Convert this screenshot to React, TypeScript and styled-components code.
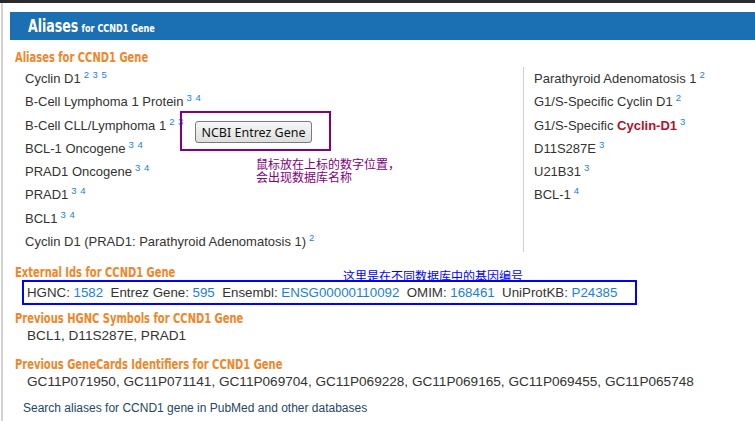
import React from "react";
import styled, { createGlobalStyle } from "styled-components";

const GlobalStyle = createGlobalStyle`
	html, body {
		margin: 0;
		padding: 0;
		background: #ffffff;
	}
	body {
		font-family: "Liberation Sans", Arial, sans-serif;
		color: #333333;
		width: 755px;
		height: 421px;
		overflow: hidden;
	}
`;

const condensed = `"Liberation Sans Narrow", "DejaVu Sans Condensed", "Roboto Condensed", "Liberation Sans", sans-serif`;

const TopBar = styled.div`
	height: 3px;
	background: #2a2a2a;
`;

const Page = styled.div`
	margin-left: 1px;
	border-left: 2px solid #d2d2d2;
	height: 418px;
	padding-top: 9px;
	box-sizing: border-box;
`;

const Header = styled.div`
	margin-left: 7px;
	height: 28px;
	background: #1b6fb3;
	padding-left: 18px;
	color: #ffffff;
	font-family: ${condensed};
	font-weight: bold;
`;

const HeaderText = styled.div`
	display: inline-block;
	line-height: 28px;
	transform: scaleX(0.82);
	transform-origin: left center;
	white-space: nowrap;
`;

const HeaderTitle = styled.span`
	font-size: 17px;
	margin-right: 4px;
`;

const HeaderSub = styled.span`
	font-size: 11px;
`;

const Content = styled.div`
	padding-left: 12px;
	position: relative;
`;

const Heading = styled.div<{ $top: number }>`
	font-family: ${condensed};
	font-weight: bold;
	font-size: 14px;
	line-height: 16px;
	color: #f0862a;
	margin-top: ${(p) => p.$top}px;
	white-space: nowrap;
	transform: scaleX(0.79);
	transform-origin: left center;
`;

const AliasGrid = styled.div`
	display: grid;
	grid-template-columns: 508px 1fr;
	margin-top: 2px;
	position: relative;
`;

const LeftCol = styled.div`
	padding-left: 10px;
`;

const RightCol = styled.div`
	border-left: 1px solid #d0d0d0;
	padding-left: 10px;
	height: 185px;
`;

const Alias = styled.div`
	height: 23.3px;
	line-height: 23.3px;
	font-size: 13px;
	color: #333333;
	white-space: nowrap;
`;

const Sup = styled.sup`
	font-size: 9.5px;
	color: #1a7fd6;
	margin-left: 3px;
	vertical-align: 5px;
	line-height: 0;
	word-spacing: 1px;
`;

const Red = styled.b`
	color: #b0122c;
`;

const PopupBox = styled.div`
	position: absolute;
	left: 165px;
	top: 44px;
	width: 151px;
	height: 40px;
	box-sizing: border-box;
	border: 2px solid #800080;
	display: flex;
	align-items: center;
	padding-left: 13px;
`;

const GeneButton = styled.button`
	height: 22px;
	width: 117px;
	padding: 0;
	border: 1px solid #7a7a7a;
	border-radius: 3px;
	background: linear-gradient(#f7f7f7, #dedede);
	font-family: "Noto Sans", "Open Sans", sans-serif;
	font-size: 12.5px;
	color: #111111;
	margin-top: 2px;
`;

const Note = styled.div<{ $color: string; $left: number; $top: number }>`
	position: absolute;
	left: ${(p) => p.$left}px;
	top: ${(p) => p.$top}px;
	font-family: "Noto Sans CJK SC", sans-serif;
	font-size: 12px;
	line-height: 13px;
	color: ${(p) => p.$color};
	white-space: nowrap;
`;

const IdBox = styled.div`
	margin-left: 7px;
	width: 608px;
	height: 21px;
	line-height: 21px;
	border: 2px solid #0000ff;
	padding-left: 3px;
	font-size: 13.3px;
	color: #333333;
	white-space: pre;
`;

const IdLink = styled.span`
	color: #1a7fd6;
`;

const Plain = styled.div`
	padding-left: 12px;
	font-size: 13.6px;
	line-height: 18px;
	margin-top: 1px;
	color: #333333;
	white-space: nowrap;
`;

const SearchLine = styled.div`
	padding-left: 8px;
	margin-top: 9px;
	font-size: 12px;
	line-height: 16px;
	color: #254766;
`;

const leftAliases: [React.ReactNode, string][] = [
	["Cyclin D1", "2 3 5"],
	["B-Cell Lymphoma 1 Protein", "3 4"],
	["B-Cell CLL/Lymphoma 1", "2 3"],
	["BCL-1 Oncogene", "3 4"],
	["PRAD1 Oncogene", "3 4"],
	["PRAD1", "3 4"],
	["BCL1", "3 4"],
	["Cyclin D1 (PRAD1: Parathyroid Adenomatosis 1)", "2"],
];

const rightAliases: [React.ReactNode, string][] = [
	["Parathyroid Adenomatosis 1", "2"],
	["G1/S-Specific Cyclin D1", "2"],
	[
		<>
			G1/S-Specific <Red>Cyclin-D1</Red>
		</>,
		"3",
	],
	["D11S287E", "3"],
	["U21B31", "3"],
	["BCL-1", "4"],
];

const ids: [string, string][] = [
	["HGNC", "1582"],
	["Entrez Gene", "595"],
	["Ensembl", "ENSG00000110092"],
	["OMIM", "168461"],
	["UniProtKB", "P24385"],
];

const App = () => {
	return (
		<>
			<GlobalStyle />
			<TopBar />
			<Page>
				<Header>
					<HeaderText>
						<HeaderTitle>Aliases</HeaderTitle>
						<HeaderSub>for CCND1 Gene</HeaderSub>
					</HeaderText>
				</Header>
				<Content>
					<Heading $top={9}>Aliases for CCND1 Gene</Heading>
					<AliasGrid>
						<LeftCol>
							{leftAliases.map(([name, refs], i) => (
								<Alias key={i}>
									{name}
									<Sup>{refs}</Sup>
								</Alias>
							))}
						</LeftCol>
						<RightCol>
							{rightAliases.map(([name, refs], i) => (
								<Alias key={i}>
									{name}
									<Sup>{refs}</Sup>
								</Alias>
							))}
						</RightCol>
						<PopupBox>
							<GeneButton>NCBI Entrez Gene</GeneButton>
						</PopupBox>
						<Note $color='#800080' $left={241} $top={90}>
							鼠标放在上标的数字位置，
							<br />
							会出现数据库名称
						</Note>
					</AliasGrid>
					<Heading $top={11}>External Ids for CCND1 Gene</Heading>
					<Note $color='#0000ff' $left={340} $top={220}>
						这里是在不同数据库中的基因编号
					</Note>
					<IdBox>
						{ids.map(([label, value], i) => (
							<React.Fragment key={label}>
								{label}: <IdLink>{value}</IdLink>
								{i < ids.length - 1 ? "  " : ""}
							</React.Fragment>
						))}
					</IdBox>
					<Heading $top={5}>Previous HGNC Symbols for CCND1 Gene</Heading>
					<Plain>BCL1, D11S287E, PRAD1</Plain>
					<Heading $top={11}>Previous GeneCards Identifiers for CCND1 Gene</Heading>
					<Plain>
						GC11P071950, GC11P071141, GC11P069704, GC11P069228, GC11P069165, GC11P069455,
						GC11P065748
					</Plain>
					<SearchLine>Search aliases for CCND1 gene in PubMed and other databases</SearchLine>
				</Content>
			</Page>
		</>
	);
};

export default App;
